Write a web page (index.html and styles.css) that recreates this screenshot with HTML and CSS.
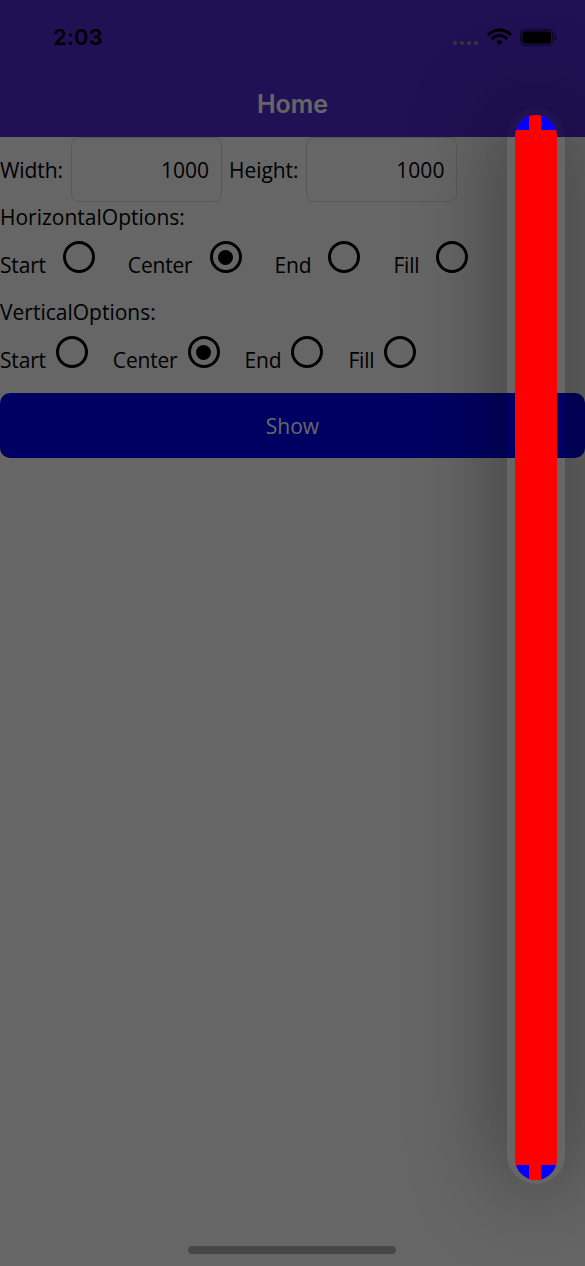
FILE: index.html
```html
<!DOCTYPE html>
<html>
<head>
<meta charset="utf-8">
<title>Home</title>
<link rel="stylesheet" href="styles.css">
</head>
<body>
<div class="screen">
  <header class="topbar">
    <div class="status">
      <span class="time">2:03</span>
      <div class="status-icons">
        <span class="dots"><i></i><i></i><i></i><i></i></span>
        <svg class="wifi" width="25" height="18" viewBox="0 0 25 18">
          <path d="M1.8 6.2 A15.5 15.5 0 0 1 23.2 6.2" fill="none" stroke="#000" stroke-width="3" stroke-linecap="round"/>
          <path d="M5.6 10.2 A10 10 0 0 1 19.4 10.2" fill="none" stroke="#000" stroke-width="3" stroke-linecap="round"/>
          <path d="M9.2 13.8 A4.8 4.8 0 0 1 15.8 13.8 L12.5 17.2 Z" fill="#000"/>
        </svg>
        <svg class="battery" width="38" height="17" viewBox="0 0 38 17">
          <rect x="0.75" y="0.75" width="32" height="15.5" rx="4" fill="none" stroke="#000" stroke-opacity="0.5" stroke-width="1.5"/>
          <rect x="2.5" y="2.5" width="28.5" height="12" rx="2.5" fill="#000"/>
          <path d="M34.5 5.5 Q36.8 6 36.8 8.5 Q36.8 11 34.5 11.5 Z" fill="#000" fill-opacity="0.5"/>
        </svg>
      </div>
    </div>
    <div class="nav"><span class="nav-title">Home</span></div>
  </header>

  <main class="content">
    <div class="size-row">
      <span class="label">Width:</span>
      <div class="entry">1000</div>
      <span class="label label-height">Height:</span>
      <div class="entry">1000</div>
    </div>

    <div class="section-label">HorizontalOptions:</div>
    <div class="radio-row h">
      <div class="opt"><span class="opt-label">Start</span><span class="radio"></span></div>
      <div class="opt"><span class="opt-label">Center</span><span class="radio on"></span></div>
      <div class="opt"><span class="opt-label">End</span><span class="radio"></span></div>
      <div class="opt"><span class="opt-label">Fill</span><span class="radio"></span></div>
    </div>

    <div class="section-label">VerticalOptions:</div>
    <div class="radio-row v">
      <div class="opt"><span class="opt-label">Start</span><span class="radio"></span></div>
      <div class="opt"><span class="opt-label">Center</span><span class="radio on"></span></div>
      <div class="opt"><span class="opt-label">End</span><span class="radio"></span></div>
      <div class="opt"><span class="opt-label">Fill</span><span class="radio"></span></div>
    </div>

    <button class="show">Show</button>
  </main>

  <div class="scrim"></div>

  <div class="popup">
    <div class="bar">
      <div class="cap"></div>
      <div class="cap"></div>
    </div>
  </div>

  <div class="home-indicator"></div>
</div>
</body>
</html>
```

FILE: styles.css
```css
html, body {
  margin: 0;
  padding: 0;
  background: #000;
}

.screen {
  position: relative;
  width: 585px;
  height: 1266px;
  overflow: hidden;
  background: #ffffff;
}

.topbar {
  background: #512bd4;
}

.status {
  box-sizing: border-box;
  height: 70px;
  padding-top: 4px;
  display: flex;
  align-items: center;
}

.time {
  margin-left: 53px;
  font-family: Inter, "Liberation Sans", sans-serif;
  font-weight: 600;
  font-size: 22px;
  color: #000;
  letter-spacing: 0.2px;
}

.status-icons {
  margin-left: auto;
  margin-right: 27px;
  display: flex;
  align-items: center;
}

.dots {
  display: flex;
  gap: 3px;
  margin-top: 12px;
}

.dots i {
  display: block;
  width: 4px;
  height: 4px;
  border-radius: 50%;
  background: #8a8a8a;
}

.wifi {
  display: block;
  margin-left: 9px;
}

.battery {
  display: block;
  margin-left: 8px;
}

.nav {
  height: 67px;
  display: flex;
  align-items: center;
  justify-content: center;
}

.nav-title {
  font-family: Inter, "Liberation Sans", sans-serif;
  font-weight: 600;
  font-size: 25px;
  color: #ffffff;
}

.content {
  font-family: "Open Sans", "Liberation Sans", sans-serif;
  font-size: 21px;
  line-height: 28px;
  color: #000;
}

.size-row {
  display: flex;
  align-items: center;
  height: 66px;
}

.entry {
  box-sizing: border-box;
  align-self: flex-start;
  width: 151px;
  height: 65px;
  margin-left: 8px;
  padding-right: 12px;
  border: 1px solid #dedede;
  border-radius: 8px;
  display: flex;
  align-items: center;
  justify-content: flex-end;
}

.label {
  letter-spacing: -0.07px;
}

.label-height {
  margin-left: 7px;
}

.section-label {
  height: 28px;
}

.radio-row {
  display: flex;
  align-items: flex-start;
  height: 67px;
}

.opt {
  display: flex;
  align-items: flex-start;
}

.opt-label {
  margin-top: 20px;
  letter-spacing: -0.18px;
}

.radio {
  box-sizing: border-box;
  width: 32px;
  height: 32px;
  margin-top: 10px;
  border: 3px solid #000;
  border-radius: 50%;
  display: flex;
  align-items: center;
  justify-content: center;
}

.radio.on::after {
  content: "";
  width: 15px;
  height: 15px;
  border-radius: 50%;
  background: #000;
}

.h .radio {
  margin-left: 17px;
  margin-right: 33px;
}

.v .radio {
  margin-left: 10px;
  margin-right: 25px;
}

.show {
  display: block;
  width: 100%;
  height: 65px;
  margin: 0;
  padding: 0;
  border: 0;
  border-radius: 10px;
  background: #0000f8;
  color: #ffffff;
  font-family: "Open Sans", "Liberation Sans", sans-serif;
  font-size: 21px;
}

.scrim {
  position: absolute;
  inset: 0;
  background: rgba(0, 0, 0, 0.6);
}

.popup {
  position: absolute;
  left: 507px;
  top: 108px;
  width: 58px;
  height: 1076px;
  box-sizing: border-box;
  padding: 7px 8px 4px 8px;
  border-radius: 29px;
  box-shadow: 0 0 90px 6px rgba(0, 0, 0, 0.42);
}

.bar {
  height: 100%;
  background: #ff0000;
  border-radius: 21px;
  overflow: hidden;
  display: flex;
  flex-direction: column;
  justify-content: space-between;
}

.cap {
  height: 15px;
  background: linear-gradient(to right, #0000ff 0 14px, #ff0000 14px 26px, #0000ff 26px);
}

.home-indicator {
  position: absolute;
  left: 188px;
  top: 1246px;
  width: 208px;
  height: 8px;
  border-radius: 4px;
  background: rgba(0, 0, 0, 0.3);
}
```
